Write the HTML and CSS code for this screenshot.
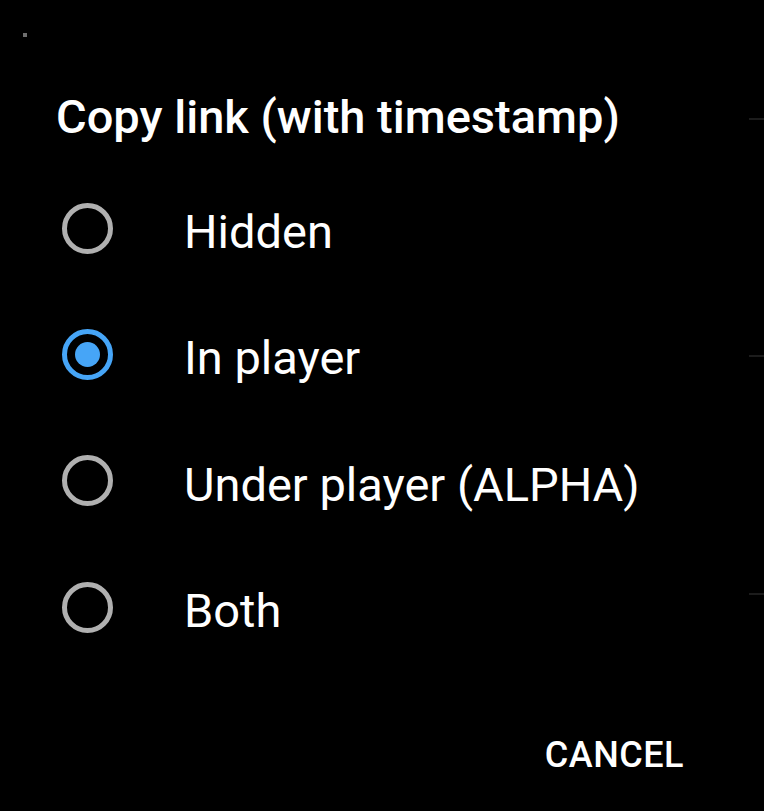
FILE: index.html
```html
<!DOCTYPE html>
<html lang="en">
<head>
<meta charset="utf-8">
<title>Copy link (with timestamp)</title>
<link rel="stylesheet" href="styles.css">
</head>
<body>
<div class="backdrop">
  <span class="speck"></span>
  <span class="edge edge-1"></span>
  <span class="edge edge-2"></span>
  <span class="edge edge-3"></span>
</div>
<div class="dialog" role="dialog" aria-labelledby="dlg-title">
  <h1 class="title" id="dlg-title">Copy link (with timestamp)</h1>
  <div class="options" role="radiogroup">
    <div class="option" role="radio" aria-checked="false"><span class="radio"></span><span class="label">Hidden</span></div>
    <div class="option" role="radio" aria-checked="true"><span class="radio radio-checked"></span><span class="label">In player</span></div>
    <div class="option" role="radio" aria-checked="false"><span class="radio"></span><span class="label">Under player (ALPHA)</span></div>
    <div class="option" role="radio" aria-checked="false"><span class="radio"></span><span class="label">Both</span></div>
  </div>
  <div class="actions">
    <button class="btn" type="button">CANCEL</button>
  </div>
</div>
</body>
</html>
```
FILE: styles.css
```css
html, body {
  margin: 0;
  padding: 0;
  background: #000;
  height: 100%;
}
body {
  font-family: Roboto, "Noto Sans", "Liberation Sans", sans-serif;
  color: #fff;
  position: relative;
  overflow: hidden;
}
.backdrop {
  position: absolute;
  inset: 0;
  pointer-events: none;
}
.speck {
  position: absolute;
  left: 23px;
  top: 33px;
  width: 4px;
  height: 4px;
  background: #6e6e6e;
}
.edge {
  position: absolute;
  right: 0;
  width: 15px;
  height: 2px;
  background: #1c1c1c;
}
.edge-1 { top: 118px; }
.edge-2 { top: 355px; }
.edge-3 { top: 593px; }

.dialog {
  position: relative;
  padding: 89px 80px 0 56px;
  display: flex;
  flex-direction: column;
}
.title {
  margin: 0;
  font-size: 47px;
  font-weight: 500;
  line-height: 56px;
  letter-spacing: 0;
}
.options {
  margin-top: 22px;
  display: flex;
  flex-direction: column;
}
.option {
  height: 126.3px;
  display: flex;
  align-items: center;
  padding-left: 6px;
}
.radio {
  box-sizing: border-box;
  width: 51px;
  height: 51px;
  border: 5px solid #b0b0b0;
  border-radius: 50%;
  flex: none;
  display: flex;
  align-items: center;
  justify-content: center;
  margin-bottom: 4px;
}
.radio-checked {
  border-color: #46a5f7;
}
.radio-checked::after {
  content: "";
  width: 25px;
  height: 25px;
  border-radius: 50%;
  background: #46a5f7;
}
.label {
  margin-left: 71px;
  padding-top: 4px;
  font-size: 47px;
  line-height: 56px;
  font-weight: 400;
}
.actions {
  margin-top: 61px;
  display: flex;
  justify-content: flex-end;
}
.btn {
  background: none;
  border: 0;
  padding: 0;
  color: #fff;
  font-family: Roboto, "Noto Sans", "Liberation Sans", sans-serif;
  font-size: 36px;
  font-weight: 500;
  line-height: 44px;
  letter-spacing: 0.5px;
}
```
